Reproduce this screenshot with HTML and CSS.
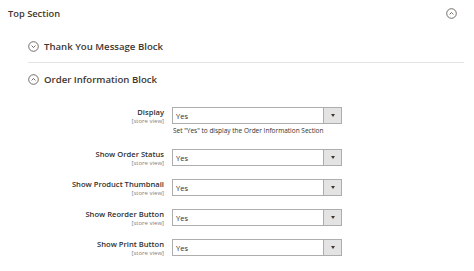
FILE: index.html
```html
<!DOCTYPE html>
<html lang="en">
  <head>
    <meta charset="UTF-8" />
    <meta name="viewport" content="width=device-width, initial-scale=1.0" />
    <title>Top Section</title>
    <link rel="stylesheet" href="styles.css">
  </head>
  <body>
    <header class="section-head">
      <h1>Top Section</h1>
      <svg class="toggle" width="11" height="11" viewBox="0 0 11 11">
        <circle cx="5.5" cy="5.5" r="4.8" />
        <path d="M3.6 6.4 L5.5 4.5 L7.4 6.4" />
      </svg>
    </header>
    <main class="group">
      <h2 class="group-title closed">
        <svg class="toggle" width="11" height="11" viewBox="0 0 11 11">
          <circle cx="5.5" cy="5.5" r="4.8" />
          <path d="M3.6 4.6 L5.5 6.5 L7.4 4.6" />
        </svg>
        Thank You Message Block
      </h2>
      <h2 class="group-title">
        <svg class="toggle" width="11" height="11" viewBox="0 0 11 11">
          <circle cx="5.5" cy="5.5" r="4.8" />
          <path d="M3.6 6.4 L5.5 4.5 L7.4 6.4" />
        </svg>
        Order Information Block
      </h2>
      <section class="fields">
        <div class="row">
          <div class="label">
            <span class="name">Display</span>
            <span class="scope">[store view]</span>
          </div>
          <div class="control">
            <div class="select"><span>Yes</span><i class="arrow"></i></div>
            <p class="note">Set "Yes" to display the Order Information Section</p>
          </div>
        </div>
        <div class="row">
          <div class="label">
            <span class="name">Show Order Status</span>
            <span class="scope">[store view]</span>
          </div>
          <div class="control">
            <div class="select"><span>Yes</span><i class="arrow"></i></div>
          </div>
        </div>
        <div class="row">
          <div class="label">
            <span class="name">Show Product Thumbnail</span>
            <span class="scope">[store view]</span>
          </div>
          <div class="control">
            <div class="select"><span>Yes</span><i class="arrow"></i></div>
          </div>
        </div>
        <div class="row">
          <div class="label">
            <span class="name">Show Reorder Button</span>
            <span class="scope">[store view]</span>
          </div>
          <div class="control">
            <div class="select"><span>Yes</span><i class="arrow"></i></div>
          </div>
        </div>
        <div class="row">
          <div class="label">
            <span class="name">Show Print Button</span>
            <span class="scope">[store view]</span>
          </div>
          <div class="control">
            <div class="select"><span>Yes</span><i class="arrow"></i></div>
          </div>
        </div>
      </section>
    </main>
  </body>
</html>
```

FILE: styles.css
```css
* {
  padding: 0;
  margin: 0;
  box-sizing: border-box;
}

body {
  width: 474px;
  height: 271px;
  overflow: hidden;
  background: #fff;
  font-family: "Open Sans", "Liberation Sans", sans-serif;
  color: #303030;
}

.toggle {
  flex: none;
  fill: none;
  stroke: #514943;
  stroke-width: 0.8;
}

.section-head {
  height: 26px;
  display: flex;
  align-items: center;
  justify-content: space-between;
  padding: 0 17px 0 8px;
}

h1 {
  font-size: 9.3px;
  font-weight: 600;
  color: #41362f;
}

.group {
  margin: 4px 10px 0 28px;
}

.group-title {
  display: flex;
  align-items: center;
  gap: 5px;
  height: 33px;
  font-size: 9.6px;
  font-weight: 600;
  color: #41362f;
}

.group-title.closed {
  border-bottom: 1px solid #e3e3e3;
}

.fields {
  padding-top: 11px;
  display: flex;
  flex-direction: column;
  gap: 12px;
}

.row {
  display: flex;
  gap: 8px;
}

.label {
  width: 136px;
  display: flex;
  flex-direction: column;
  align-items: flex-end;
}

.name {
  font-size: 7.6px;
  font-weight: 600;
  line-height: 10px;
  color: #303030;
}

.scope {
  font-size: 6px;
  line-height: 8px;
  color: #808080;
}

.select {
  width: 170px;
  height: 17px;
  display: flex;
  align-items: center;
  justify-content: space-between;
  border: 1px solid #adadad;
  font-size: 7.5px;
  padding-left: 3px;
}

.arrow {
  width: 18px;
  height: 100%;
  background: #e3e3e3;
  border-left: 1px solid #adadad;
  display: flex;
  align-items: center;
  justify-content: center;
}

.arrow::after {
  content: "";
  border-left: 2px solid transparent;
  border-right: 2px solid transparent;
  border-top: 3px solid #41362f;
}

.note {
  margin-top: 1px;
  font-size: 6.5px;
  line-height: 12px;
  padding-left: 1px;
}
```
